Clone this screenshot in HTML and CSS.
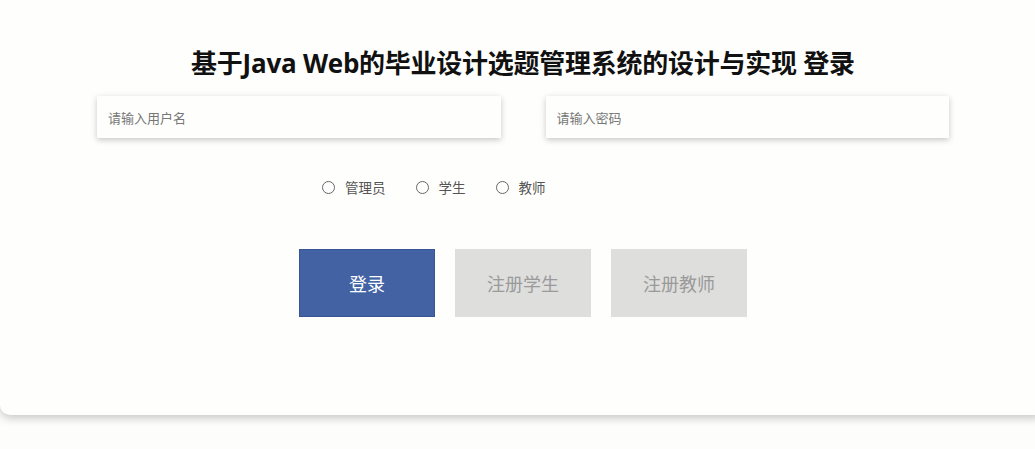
FILE: index.html
```html
<!DOCTYPE html>
<html lang="zh-CN">
<head>
<meta charset="utf-8">
<title>登录</title>
<link rel="stylesheet" href="styles.css">
</head>
<body>
<div class="card">
  <h1 class="title">基于Java Web的毕业设计选题管理系统的设计与实现 登录</h1>
  <div class="inputs">
    <input class="field" type="text" placeholder="请输入用户名">
    <input class="field" type="password" placeholder="请输入密码">
  </div>
  <div class="roles">
    <label class="role"><span class="dot"></span>管理员</label>
    <label class="role"><span class="dot"></span>学生</label>
    <label class="role"><span class="dot"></span>教师</label>
  </div>
  <div class="buttons">
    <button class="btn btn-primary">登录</button>
    <button class="btn btn-muted">注册学生</button>
    <button class="btn btn-muted">注册教师</button>
  </div>
</div>
</body>
</html>
```
FILE: styles.css
```css
html, body {
  margin: 0;
  padding: 0;
  background: #fdfdfb;
  overflow: hidden;
  height: 449px;
}
body {
  font-family: "Open Sans", "Noto Sans CJK SC", sans-serif;
}
.card {
  margin: -20px -11px 0 0;
  height: 435px;
  box-sizing: border-box;
  background: #fefefc;
  border-radius: 10px;
  box-shadow: 0 3px 10px rgba(0, 0, 0, 0.22);
  padding: 68px 97px 0 97px;
}
.title {
  margin: 0;
  text-align: center;
  font-size: 26px;
  line-height: 30px;
  font-weight: 700;
  color: #111;
  letter-spacing: -0.25px;
}
.inputs {
  display: flex;
  gap: 45px;
  margin-top: 18px;
}
.field {
  flex: 1;
  height: 42px;
  box-sizing: border-box;
  border: none;
  outline: none;
  background: #fefefc;
  box-shadow: 0 2px 6px rgba(0, 0, 0, 0.22);
  padding: 0 11px;
  font-family: "Noto Sans CJK SC", sans-serif;
  font-size: 13px;
  color: #333;
  min-width: 0;
}
.field::placeholder {
  color: #777;
}
.roles {
  display: flex;
  gap: 30px;
  margin-top: 41px;
  padding-left: 225px;
  height: 16px;
  align-items: center;
}
.role {
  display: flex;
  align-items: center;
  gap: 10px;
  font-family: "Noto Sans CJK SC", sans-serif;
  font-size: 13.5px;
  color: #555;
  line-height: 16px;
}
.dot {
  width: 11px;
  height: 11px;
  border: 1px solid #666;
  border-radius: 50%;
  background: #fff;
}
.buttons {
  display: flex;
  justify-content: center;
  gap: 20px;
  margin-top: 54px;
}
.btn {
  width: 136px;
  height: 68px;
  border: none;
  font-family: "Noto Sans CJK SC", sans-serif;
  font-size: 18px;
  padding: 0;
}
.btn-primary {
  background: #4262a3;
  border: 1px solid #385593;
  color: #fff;
}
.btn-muted {
  background: #dededd;
  color: #9a9a9a;
}
```
